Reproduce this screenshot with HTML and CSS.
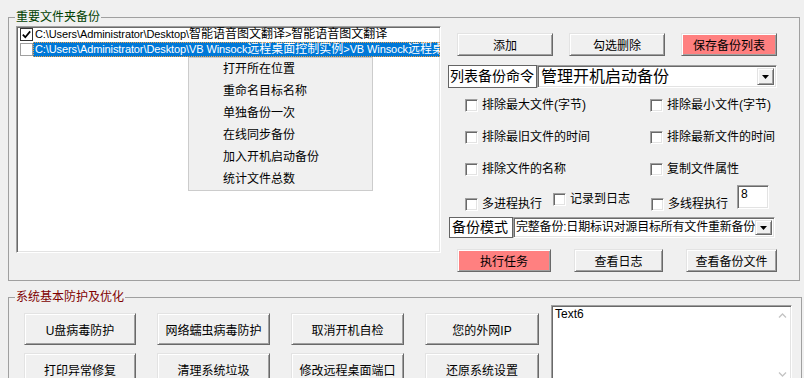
FILE: index.html
```html
<!DOCTYPE html>
<html lang="zh-CN">
<head>
    <meta charset="UTF-8">
    <title>文件夹备份</title>
    <link rel="stylesheet" href="styles.css">
</head>
<body>
<fieldset class="group group-backup">
    <legend>重要文件夹备份</legend>
    <div class="backup-body">
        <div class="filelist">
            <div class="item">
                <span class="lbox checked"><svg width="11" height="11" viewBox="0 0 11 11"><path d="M1.8 5.6 L4.3 8.2 L9.2 2.4" fill="none" stroke="#000" stroke-width="1.7"/></svg></span>
                <span class="path">C:\Users\Administrator\Desktop\<span class="cjk">智能语音图文翻译</span>&gt;<span class="cjk">智能语音图文翻译</span></span>
            </div>
            <div class="item">
                <span class="lbox"></span>
                <span class="path selected">C:\Users\Administrator\Desktop\VB Winsock<span class="cjk">远程桌面控制实例</span>&gt;VB Winsock<span class="cjk">远程桌面控制实例</span></span>
            </div>
        </div>

        <div class="panel">
            <div class="btn-row top-btns">
                <button class="btn">添加</button>
                <button class="btn">勾选删除</button>
                <button class="btn btn-red">保存备份列表</button>
            </div>

            <div class="combo-row cmd-row">
                <div class="caption cmd-caption">列表备份命令</div>
                <div class="combo cmd-combo">
                    <span class="combo-text">管理开机启动备份</span>
                    <span class="drop"><svg width="7" height="4" viewBox="0 0 7 4"><polygon points="0,0 7,0 3.5,4" fill="#000"/></svg></span>
                </div>
            </div>

            <div class="options">
                <label class="chk"><span class="box"></span>排除最大文件(字节)</label>
                <label class="chk"><span class="box"></span>排除最小文件(字节)</label>
                <label class="chk"><span class="box"></span>排除最旧文件的时间</label>
                <label class="chk"><span class="box"></span>排除最新文件的时间</label>
                <label class="chk"><span class="box"></span>排除文件的名称</label>
                <label class="chk"><span class="box"></span>复制文件属性</label>
            </div>

            <div class="run-row">
                <label class="chk low"><span class="box"></span>多进程执行</label>
                <label class="chk high"><span class="box"></span>记录到日志</label>
                <label class="chk low"><span class="box"></span>多线程执行</label>
                <div class="field threads">8</div>
            </div>

            <div class="combo-row mode-row">
                <div class="caption mode-caption">备份模式</div>
                <div class="combo mode-combo">
                    <span class="combo-text">完整备份:日期标识对源目标所有文件重新备份</span>
                    <span class="drop"><svg width="7" height="4" viewBox="0 0 7 4"><polygon points="0,0 7,0 3.5,4" fill="#000"/></svg></span>
                </div>
            </div>

            <div class="btn-row task-btns">
                <button class="btn btn-red task-run">执行任务</button>
                <button class="btn task-log">查看日志</button>
                <button class="btn task-files">查看备份文件</button>
            </div>
        </div>
    </div>
</fieldset>

<fieldset class="group group-system">
    <legend>系统基本防护及优化</legend>
    <div class="system-body">
        <div class="sys-grid">
            <button class="btn">U盘病毒防护</button>
            <button class="btn">网络蠕虫病毒防护</button>
            <button class="btn">取消开机自检</button>
            <button class="btn">您的外网IP</button>
            <button class="btn">打印异常修复</button>
            <button class="btn">清理系统垃圾</button>
            <button class="btn">修改远程桌面端口</button>
            <button class="btn">还原系统设置</button>
        </div>
        <div class="memo">
            <div class="memo-text">Text6</div>
            <div class="memo-bar">
                <span class="arrow"><svg width="9" height="5" viewBox="0 0 9 5"><polyline points="1,4.5 4.5,1 8,4.5" fill="none" stroke="#c4c4c4" stroke-width="1.3"/></svg></span>
                <span class="arrow"><svg width="9" height="5" viewBox="0 0 9 5"><polyline points="1,0.5 4.5,4 8,0.5" fill="none" stroke="#c4c4c4" stroke-width="1.3"/></svg></span>
            </div>
        </div>
    </div>
</fieldset>

<!-- menu contextuel ouvert sur la 2e ligne -->
<div class="context-menu">
    <div class="menu-item">打开所在位置</div>
    <div class="menu-item">重命名目标名称</div>
    <div class="menu-item">单独备份一次</div>
    <div class="menu-item">在线同步备份</div>
    <div class="menu-item">加入开机启动备份</div>
    <div class="menu-item">统计文件总数</div>
</div>
</body>
</html>
```

FILE: styles.css
```css
* {
    box-sizing: border-box;
}
body {
    margin: 0;
    width: 804px;
    height: 378px;
    overflow: hidden;
    background: #f0f0f0;
    font-family: "Liberation Sans", "Noto Sans CJK SC", sans-serif;
    font-size: 12px;
    color: #000;
}
.group {
    margin: 9px 0 0 8px;
    padding: 0;
    border: 1px solid #a0a0a0;
    min-width: 0;
}
.group legend {
    margin-left: 6px;
    padding: 0 1px;
    line-height: 16px;
    font-size: 12px;
}
.group-backup {
    width: 792px;
}
.group-backup legend {
    color: #004000;
}
.group-system {
    width: 794px;
    margin-top: 8px;
}
.group-system legend {
    color: #800000;
}

/* shared win32 look */
.btn {
    font: inherit;
    padding: 0;
    color: #000;
    background: #f0f0f0;
    border: 1px solid;
    border-color: #e3e3e3 #696969 #696969 #e3e3e3;
    box-shadow: inset 1px 1px #fff, inset -1px -1px #a0a0a0;
    white-space: nowrap;
}
.btn-red {
    background: #ff8080;
}
.filelist, .combo, .box, .field, .memo {
    background: #fff;
    border: 1px solid;
    border-color: #a0a0a0 #fff #fff #a0a0a0;
    box-shadow: inset 1px 1px #696969, inset -1px -1px #e3e3e3;
}

/* list */
.backup-body {
    display: flex;
    align-items: flex-start;
    height: 255px;
}
.filelist {
    margin: 1px 0 0 7px;
    width: 425px;
    height: 227px;
    overflow: hidden;
}
.item {
    display: flex;
    align-items: center;
    height: 15px;
    padding-left: 3px;
    white-space: nowrap;
}
.lbox {
    flex: none;
    width: 13px;
    height: 13px;
    border: 1px solid #a0a0a0;
    background: #fff;
    display: flex;
    align-items: center;
    justify-content: center;
}
.lbox.checked {
    border-color: #333;
}
.path {
    height: 15px;
    padding: 0 2px;
    font-size: 11px;
    line-height: 15px;
    letter-spacing: -0.1px;
}
.path .cjk {
    font-size: 12px;
    letter-spacing: 0;
}
.path.selected {
    flex: 1;
    min-width: 0;
    overflow: hidden;
    background: #0078d7;
    color: #fff;
    outline: 1px dotted #f5a142;
    outline-offset: -1px;
}

/* right panel */
.panel {
    margin-left: 7px;
    width: 329px;
    display: flex;
    flex-direction: column;
}
.btn-row {
    display: flex;
    justify-content: space-between;
}
.top-btns {
    margin-top: 8px;
    padding-left: 9px;
}
.top-btns .btn {
    width: 96px;
    height: 23px;
}
.combo-row {
    display: flex;
}
.caption {
    background: #fff;
    border: 1px solid #646464;
    white-space: nowrap;
    overflow: hidden;
}
.cmd-row {
    margin-top: 9px;
    height: 23px;
}
.cmd-caption {
    width: 89px;
    padding-left: 1px;
    font-size: 14px;
    line-height: 21px;
}
.combo {
    flex: 1;
    display: flex;
    padding: 2px;
    min-width: 0;
}
.combo-text {
    flex: 1;
    min-width: 0;
    padding-left: 1px;
    white-space: nowrap;
    overflow: hidden;
}
.cmd-combo .combo-text {
    font-size: 16px;
    line-height: 17px;
}
.drop {
    flex: none;
    width: 17px;
    background: #f0f0f0;
    border: 1px solid;
    border-color: #e3e3e3 #696969 #696969 #e3e3e3;
    box-shadow: inset 1px 1px #fff, inset -1px -1px #a0a0a0;
    display: flex;
    align-items: center;
    justify-content: center;
}

.options {
    display: grid;
    grid-template-columns: 185px auto;
    row-gap: 16px;
    margin-top: 9px;
    padding-left: 17px;
}
.chk {
    display: flex;
    align-items: center;
    gap: 4px;
    height: 16px;
    line-height: 16px;
    white-space: nowrap;
}
.box {
    flex: none;
    width: 13px;
    height: 13px;
}

.run-row {
    display: grid;
    grid-template-columns: 88px 98px 86px 32px;
    align-items: start;
    height: 24px;
    margin-top: 8px;
    padding-left: 17px;
}
.run-row .low {
    margin-top: 11px;
}
.run-row .high {
    margin-top: 6px;
}
.threads {
    height: 24px;
    padding: 1px 3px;
    line-height: 14px;
}

.mode-row {
    margin-top: 8px;
    height: 21px;
    padding-left: 1px;
    padding-right: 2px;
}
.mode-caption {
    width: 64px;
    padding-left: 2px;
    font-size: 14px;
    line-height: 19px;
}
.mode-combo .combo-text {
    padding-left: 0;
    line-height: 15px;
    letter-spacing: -0.2px;
}

.task-btns {
    margin-top: 11px;
    padding-left: 9px;
}
.task-btns .btn {
    height: 23px;
}
.task-run {
    width: 94px;
}
.task-log {
    width: 89px;
}
.task-files {
    width: 91px;
}

/* system group */
.system-body {
    display: flex;
    align-items: flex-start;
    height: 90px;
}
.sys-grid {
    display: grid;
    grid-template-columns: 112px 113px 113px 114px;
    grid-auto-rows: 32px;
    gap: 8px 21px;
    margin: 8px 0 0 15px;
}
.memo {
    display: flex;
    margin-left: 12px;
    width: 241px;
    height: 80px;
}
.memo-text {
    flex: 1;
    padding: 1px 3px;
    line-height: 14px;
}
.memo-bar {
    width: 17px;
    display: flex;
    flex-direction: column;
    justify-content: space-between;
    padding: 1px 0;
}
.arrow {
    height: 17px;
    display: flex;
    align-items: center;
    justify-content: center;
}

/* context menu */
.context-menu {
    position: absolute;
    left: 188px;
    top: 57px;
    width: 185px;
    background: #f0f0f0;
    border: 1px solid #ccc;
}
.menu-item {
    height: 22px;
    line-height: 22px;
    padding-left: 34px;
    white-space: nowrap;
}
```
